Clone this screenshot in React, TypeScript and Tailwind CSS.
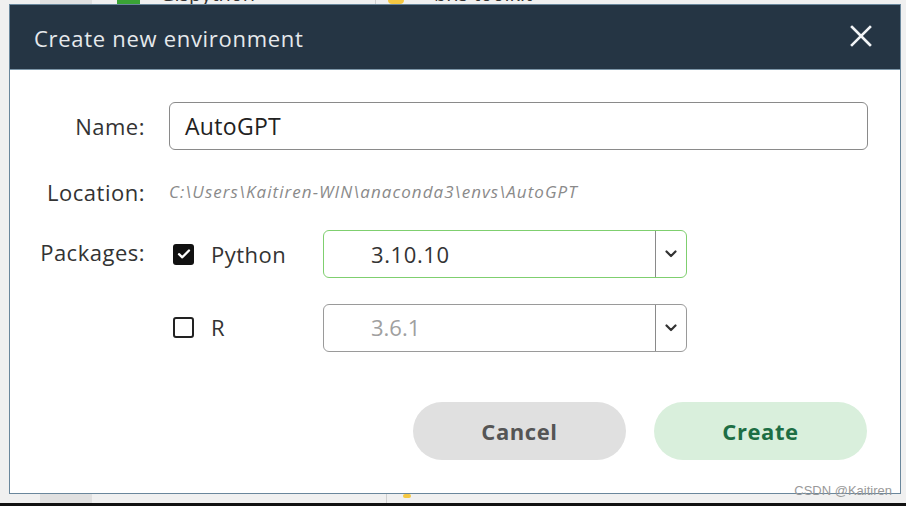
import React from "react";

const font = { fontFamily: '"Open Sans", "Noto Sans", sans-serif' };

function Chevron() {
  return (
    <svg width="12" height="8" viewBox="0 0 12 8" fill="none">
      <path d="M1.5 1.5 L6 6 L10.5 1.5" stroke="#333" strokeWidth="2.2" strokeLinecap="round" strokeLinejoin="round" />
    </svg>
  );
}

function Select({ value, active }: { value: string; active?: boolean }) {
  return (
    <div
      className={`flex h-[48px] w-[364px] items-stretch rounded-[6px] border-[1.5px] ${
        active ? "border-[#7fcf6f]" : "border-[#9a9a9a]"
      } bg-white`}
    >
      <div
        className={`flex flex-1 items-center pl-[47px] text-[22px] ${
          active ? "tracking-[0.6px] text-[#333]" : "text-[#a0a0a0]"
        }`}
      >
        {value}
      </div>
      <div className="flex w-[31px] items-center justify-center border-l border-[#8a8a8a]">
        <Chevron />
      </div>
    </div>
  );
}

function CheckBox({ checked }: { checked?: boolean }) {
  return checked ? (
    <div className="flex h-[21px] w-[21px] items-center justify-center rounded-[3px] bg-[#111]">
      <svg width="14" height="12" viewBox="0 0 14 12" fill="none">
        <path d="M2 6.2 L5.3 9.3 L12 2.5" stroke="white" strokeWidth="2.3" strokeLinecap="round" strokeLinejoin="round" />
      </svg>
    </div>
  ) : (
    <div className="h-[21px] w-[21px] rounded-[3px] border-[2px] border-[#222]" />
  );
}

export default function App() {
  return (
    <div className="relative h-[506px] w-[906px] overflow-hidden bg-[#f0f0f0]" style={font}>
      {/* backdrop */}
      <div className="flex h-[503px] flex-col justify-between">
        <div className="flex h-[4px] overflow-hidden">
          <div className="ml-[40px] h-full w-[52px] bg-[#e0e0e0]" />
          <div className="ml-[25px] h-full w-[23px] bg-[#3aa335]" />
          <div className="ml-[20px] -mt-[18px] text-[20px] leading-[24px] text-[#333]">Gispython</div>
          <div className="ml-[120px] h-full w-px bg-[#d0d0d0]" />
          <div className="ml-[12px] h-full w-[16px] rounded-b-full bg-[#f5c842]" />
          <div className="ml-[30px] -mt-[18px] text-[20px] leading-[24px] text-[#333]">bns toolkit</div>
        </div>
        <div className="flex h-[10px] overflow-hidden">
          <div className="ml-[40px] h-full w-[52px] bg-[#e0e0e0]" />
          <div className="ml-[294px] h-full w-px bg-[#d0d0d0]" />
          <div className="ml-[16px] mt-[1px] h-[4px] w-[8px] rounded-full bg-[#f5c842]" />
        </div>
      </div>
      <div className="h-[3px] bg-[#111]" />

      {/* dialog */}
      <div className="absolute left-[9px] top-[4px] flex h-[490px] w-[892px] flex-col border border-[#6a879c] bg-white">
        <div className="flex h-[65px] items-center justify-between border-b border-[#7d96a8] bg-[#253544] pl-[24px] pr-[28px]">
          <span className="mt-[3px] text-[22px] tracking-[0.7px] text-[#e6e9ec]">Create new environment</span>
          <svg width="22" height="22" viewBox="0 0 22 22" className="-mt-[2px]">
            <path d="M2 2 L20 20 M20 2 L2 20" stroke="#f2f4f6" strokeWidth="2.6" strokeLinecap="square" />
          </svg>
        </div>

        <div className="flex flex-col pt-[32px] pr-[32px] text-[#333]">
          <div className="flex h-[48px] items-center">
            <div className="w-[135px] text-right text-[22px] tracking-[0.5px]">Name:</div>
            <div className="ml-[24px] flex h-[48px] flex-1 items-center rounded-[6px] border-[1.5px] border-[#8a8a8a] pl-[15px] text-[23px] tracking-[0.3px] text-[#222]">
              AutoGPT
            </div>
          </div>

          <div className="mt-[30px] flex h-[24px] items-center">
            <div className="w-[135px] text-right text-[22px] tracking-[0.5px]">Location:</div>
            <div className="ml-[24px] text-[17px] italic tracking-[1.05px] text-[#8a8a8a]">
              C:\Users\Kaitiren-WIN\anaconda3\envs\AutoGPT
            </div>
          </div>

          <div className="mt-[26px] flex h-[48px] items-center">
            <div className="-mt-[4px] w-[135px] text-right text-[22px] tracking-[0.5px]">Packages:</div>
            <div className="ml-[28px] flex w-[150px] items-center">
              <CheckBox checked />
              <span className="ml-[17px] text-[22px] tracking-[0.5px]">Python</span>
            </div>
            <Select value="3.10.10" active />
          </div>

          <div className="mt-[25px] flex h-[49px] items-center">
            <div className="w-[135px]" />
            <div className="ml-[28px] flex w-[150px] items-center">
              <CheckBox />
              <span className="ml-[17px] text-[22px]">R</span>
            </div>
            <Select value="3.6.1" />
          </div>

          <div className="mt-[50px] flex justify-end gap-[28px] pr-[1px]">
            <button className="flex h-[58px] w-[213px] items-center justify-center rounded-full bg-[#e0e0e0] text-[22px] font-bold tracking-[0.6px] text-[#555]">
              Cancel
            </button>
            <button className="flex h-[58px] w-[213px] items-center justify-center rounded-full bg-[#d9efdc] text-[22px] font-bold tracking-[0.6px] text-[#1d6e44]">
              Create
            </button>
          </div>
        </div>
      </div>

      <div
        className="absolute bottom-[8px] right-[14px] text-[13px] leading-[14px] text-[#999]"
        style={{ fontFamily: '"Liberation Sans", Arial, sans-serif' }}
      >
        CSDN @Kaitiren
      </div>
    </div>
  );
}
